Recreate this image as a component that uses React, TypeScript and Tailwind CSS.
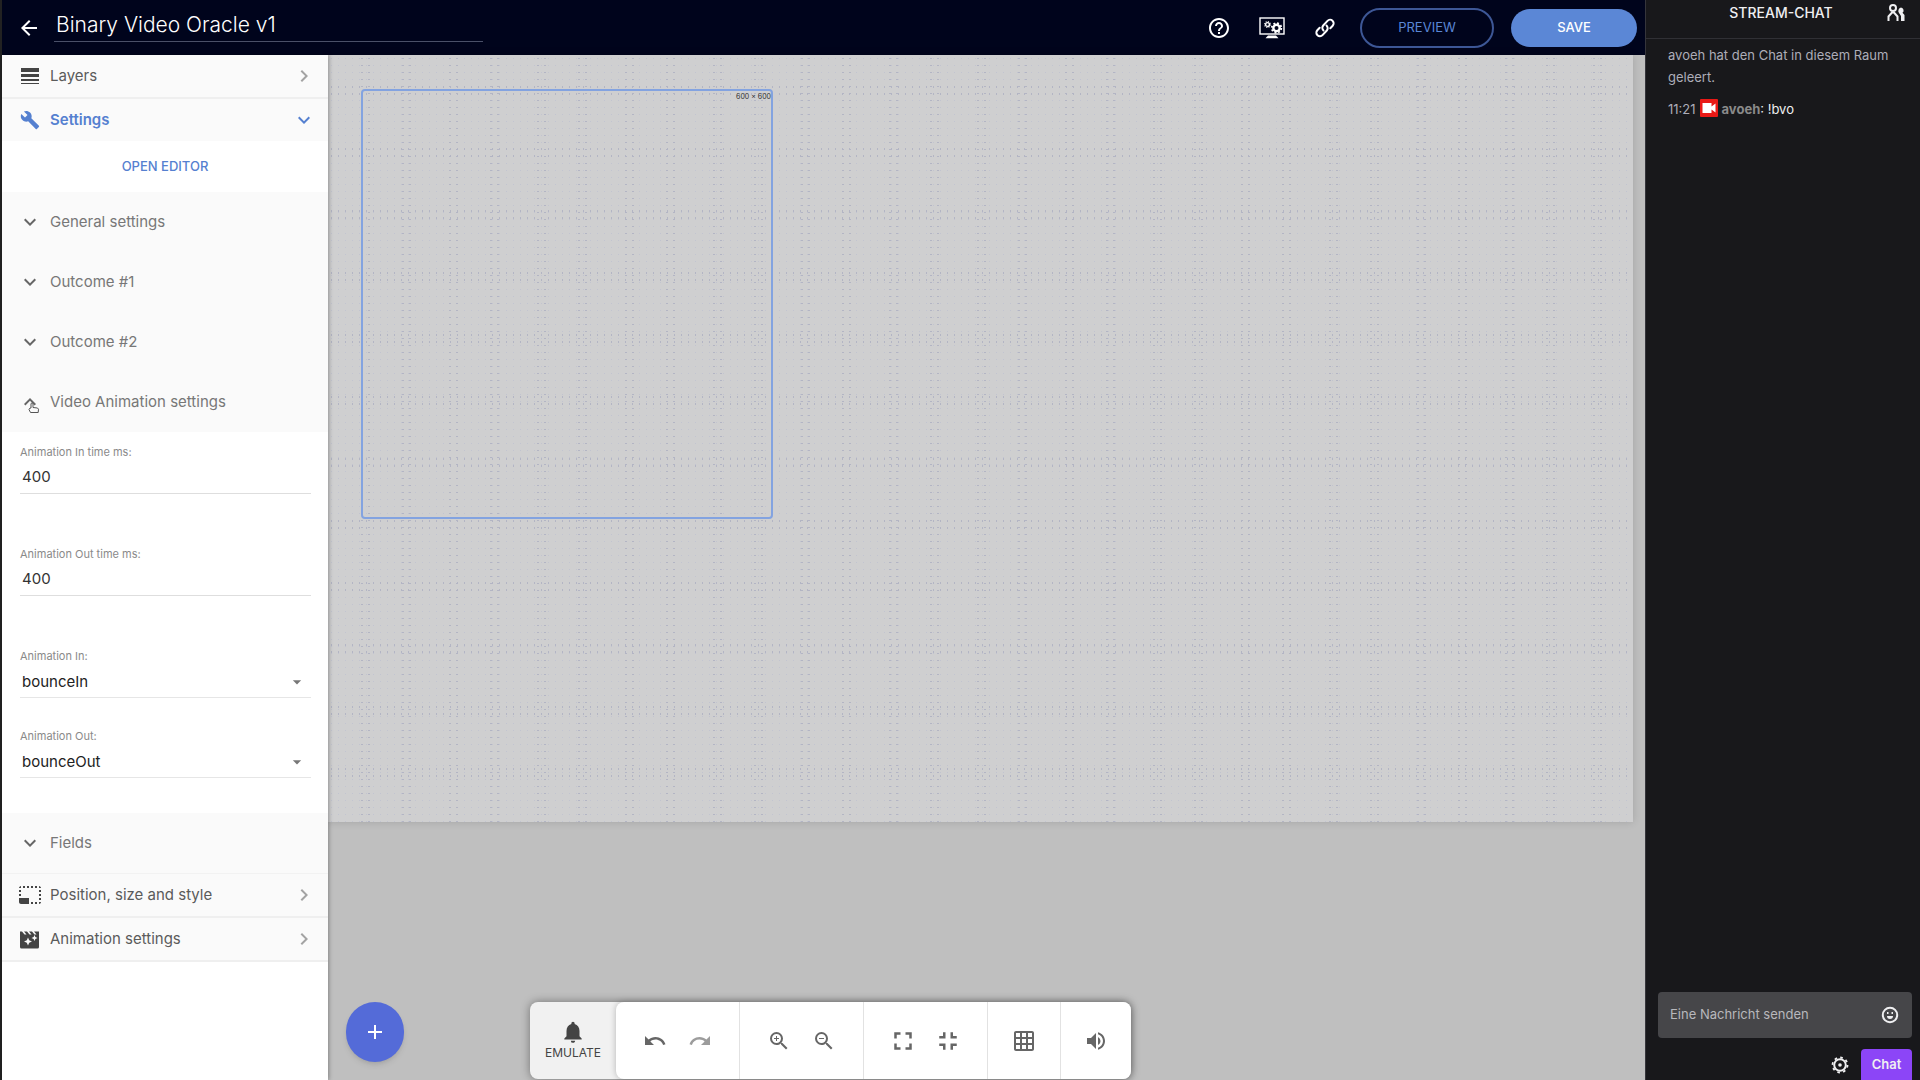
import type { ReactNode } from "react";
import {
  MdAdd,
  MdArrowBack,
  MdArrowDropDown,
  MdBuild,
  MdFullscreen,
  MdFullscreenExit,
  MdGridOn,
  MdHelpOutline,
  MdKeyboardArrowDown,
  MdKeyboardArrowRight,
  MdKeyboardArrowUp,
  MdLineWeight,
  MdNotifications,
  MdPhotoSizeSelectSmall,
  MdRedo,
  MdUndo,
  MdVolumeUp,
  MdZoomIn,
  MdZoomOut,
} from "react-icons/md";

interface toolGroupInterface {
  children: ReactNode;
  padding: string;
}

interface sectionRowInterface {
  icon: ReactNode;
  title: string;
}

interface fieldInterface {
  id: string;
  label: string;
  value: string;
}

const MonitorIcon = () => (
  <svg viewBox="0 0 26 24" className="w-[26px] h-6" fill="none">
    <rect x="1" y="2" width="24" height="16" stroke="white" strokeWidth="1.4" />
    <path d="M9 19.500h8l2.500 2.800h-13z" fill="white" />
    <circle cx="8.500" cy="8.500" r="1.900" stroke="white" strokeWidth="1.400" />
    <circle cx="8.500" cy="8.500" r="2.900" stroke="white" strokeWidth="1.100" strokeDasharray="1.100 1.177" />
    <circle cx="17.500" cy="12" r="3.200" stroke="white" strokeWidth="2.400" />
    <circle cx="17.500" cy="12" r="4.800" stroke="white" strokeWidth="1.800" strokeDasharray="1.900 1.870" />
  </svg>
);

const LinkIcon = () => (
  <svg viewBox="0 0 24 24" className="size-6" fill="none" stroke="white" strokeWidth="2" strokeLinecap="round">
    <path d="M10.500 14.500a3.600 3.600 0 0 1-.3-5l4.300-4.600a3.500 3.500 0 0 1 5.200 4.800L17.300 12.300" />
    <path d="M13.500 9.500a3.600 3.600 0 0 1 .3 5l-4.300 4.600a3.500 3.500 0 0 1-5.200-4.800L6.700 11.700" />
  </svg>
);

const MovieFilterIcon = () => (
  <svg viewBox="0 0 24 24" className="size-6" fill="#444">
    <path
      fillRule="evenodd"
      d="M2 4.500h2l2.500 3h2l-2.500-3h3l2.500 3h2l-2.500-3h3l2.500 3h2l-2.500-3h5V20a1.500 1.500 0 0 1-1.500 1.500h-16A1.500 1.500 0 0 1 2 20zM10 10.500l-1.200 2.800L6 14.500l2.800 1.200L10 18.500l1.200-2.800L14 14.500l-2.800-1.200zM16.500 8l-.9 2.100-2.100.9 2.100.9.9 2.100.9-2.100 2.100-.9-2.100-.9z"
    />
  </svg>
);

const PeopleIcon = () => (
  <svg viewBox="0 0 20 20" className="size-5" fill="none" stroke="#efeff1" strokeWidth="2">
    <circle cx="7" cy="5" r="3" />
    <path d="M2.500 18v-4.500L6 9.500h2l3.500 4V18" />
    <path d="M15 4.500a3 3 0 0 1 1.500 5.300l2 2.200v6h-3.500v-5l-2-3a3.500 3.500 0 0 1 2-5.500z" fill="#efeff1" stroke="none" />
  </svg>
);

const SmileyIcon = () => (
  <svg viewBox="0 0 20 20" className="size-5" fill="none" stroke="#efeff1" strokeWidth="2">
    <circle cx="10" cy="10" r="7.200" />
    <path d="M7 8h1.500M11.500 8H13" />
    <path d="M7 11h6a3 3 0 0 1-6 0z" fill="#efeff1" stroke="none" />
  </svg>
);

const GearIcon = () => (
  <svg viewBox="0 0 20 20" className="size-5" fill="none" stroke="#efeff1">
    <circle cx="10" cy="10" r="5.800" strokeWidth="2" />
    <circle cx="10" cy="10" r="7.500" strokeWidth="1.800" strokeDasharray="2.600 3.290" />
    <circle cx="10" cy="10" r="1.800" fill="#efeff1" stroke="none" />
  </svg>
);

const CameraBadge = () => (
  <svg viewBox="0 0 18 18" className="inline size-[18px] mx-1 align-text-bottom">
    <rect width="18" height="18" rx="1" fill="#e91916" />
    <path d="M2.500 4h9v3.500L15.500 4.500v9L11.500 10.500V14h-9z" fill="white" />
  </svg>
);

const HandCursor = () => (
  <svg viewBox="0 0 12 12" className="absolute left-2.5 top-3 size-3" fill="#fafafa" stroke="#555" strokeWidth="1">
    <path d="M3 6V2a1 1 0 0 1 2 0v3.500l4.500.5 1 1.200-.3 3.300H2.500L1 7.500 2 6z" />
  </svg>
);

/* dotted snap grid: faint dots everywhere, darker double lines on the guides */
const DotGrid = () => (
  <svg className="block size-full">
    <defs>
      <pattern id="dots" width="7" height="7" patternUnits="userSpaceOnUse">
        <rect x="3" y="3" width="1" height="1" fill="#c2c4d0" />
      </pattern>
      <pattern id="columns" width="88" height="7" patternUnits="userSpaceOnUse">
        <path d="M33 3h2v1h-2zM40 3h2v1h-2zM81 3h2v1h-2zM74 3h2v1h-2z" fill="#b3b5c4" />
      </pattern>
      <pattern id="rows" width="7" height="62" patternUnits="userSpaceOnUse">
        <path d="M3 31h1v2h-1zM3 38h1v2h-1z" fill="#b3b5c4" />
      </pattern>
    </defs>
    <rect width="100%" height="100%" fill="url(#dots)" />
    <rect width="100%" height="100%" fill="url(#columns)" />
    <rect width="100%" height="100%" fill="url(#rows)" />
  </svg>
);

const PanelRow = ({ icon, title }: sectionRowInterface) => {
  return (
    <button className="flex items-center w-full h-11 pl-4 pr-3 border-b-2 border-[#efefef] bg-[#fafafa] text-[#5b5b5b]">
      <span className="flex justify-center w-6 text-[#444]">{icon}</span>
      <span className="ml-2 grow text-left text-[15px]">{title}</span>
      <MdKeyboardArrowRight className="text-2xl text-[#a3a3a3]" />
    </button>
  );
};

const GroupRow = ({ icon, title }: sectionRowInterface) => {
  return (
    <button className="flex items-center w-full h-[60px] pl-4 bg-[#fafafa] text-[#777]">
      <span className="relative text-[#666]">{icon}</span>
      <span className="ml-2 text-[15px]">{title}</span>
    </button>
  );
};

const TextField = ({ id, label, value }: fieldInterface) => {
  return (
    <div className="h-[102px]">
      <label htmlFor={id} className="block text-[11px] leading-4 text-[#8a8a8a]">
        {label}
      </label>
      <input
        id={id}
        defaultValue={value}
        className="block w-full h-[34px] px-0.5 border-b border-[#dedede] text-[15px] text-[#333] outline-none"
      />
    </div>
  );
};

const SelectField = ({ id, label, value }: fieldInterface) => {
  return (
    <div className="h-20">
      <label htmlFor={id} className="block text-[11px] leading-4 text-[#8a8a8a]">
        {label}
      </label>
      <div className="relative">
        <select
          id={id}
          defaultValue={value}
          className="block w-full h-[34px] px-0.5 pt-1 appearance-none border-b border-[#e6e6e6] text-[15px] text-[#222] outline-none"
        >
          <option>{value}</option>
        </select>
        <MdArrowDropDown className="absolute right-1 top-2 text-xl text-[#777] pointer-events-none" />
      </div>
    </div>
  );
};

const ToolGroup = ({ children, padding }: toolGroupInterface) => {
  return (
    <div className={`flex items-center gap-[21px] ${padding} border-l border-[#e2e2e2] first:border-l-0 text-2xl text-[#666]`}>
      {children}
    </div>
  );
};

const Header = () => {
  return (
    <header className="flex items-center h-[55px] shrink-0 bg-[#00041c] text-white">
      <button aria-label="Back" className="ml-[15px]">
        <MdArrowBack className="text-2xl" />
      </button>
      <input
        aria-label="Overlay name"
        defaultValue="Binary Video Oracle v1"
        className="ml-[13px] mb-0.5 w-[429px] h-[31px] px-0.5 pb-0.5 border-b border-[#4a5068] text-[21px] font-light outline-none"
      />
      <div className="flex items-center ml-auto mr-2">
        <button aria-label="Help">
          <MdHelpOutline className="text-2xl" />
        </button>
        <button aria-label="Display settings" className="ml-7">
          <MonitorIcon />
        </button>
        <button aria-label="Copy link" className="ml-7">
          <LinkIcon />
        </button>
        <button className="ml-[23px] w-[134px] h-10 rounded-full border-2 border-[#3d5796] text-[13px] text-[#5b87d6]">
          PREVIEW
        </button>
        <button className="ml-[17px] w-[126px] h-[38px] rounded-full bg-[#5b87d6] text-[13px] font-medium">
          SAVE
        </button>
      </div>
    </header>
  );
};

const Sidebar = () => {
  return (
    <aside className="w-[326px] shrink-0 bg-white z-10 shadow-[1px_0_4px_rgba(0,0,0,0.3)]">
      <PanelRow icon={<MdLineWeight className="text-2xl" />} title="Layers" />
      <button className="flex items-center w-full h-[42px] pl-4 pr-3 bg-[#fafafa] text-[#5580d0]">
        <span className="flex justify-center w-6">
          <MdBuild className="text-xl" />
        </span>
        <span className="ml-2 grow text-left text-[15px] font-semibold">Settings</span>
        <MdKeyboardArrowDown className="text-2xl" />
      </button>
      <button className="block w-full h-[51px] text-[13px] font-medium text-[#5580d0]">OPEN EDITOR</button>

      <GroupRow icon={<MdKeyboardArrowDown className="size-6" />} title="General settings" />
      <GroupRow icon={<MdKeyboardArrowDown className="size-6" />} title="Outcome #1" />
      <GroupRow icon={<MdKeyboardArrowDown className="size-6" />} title="Outcome #2" />
      <GroupRow
        icon={
          <>
            <MdKeyboardArrowUp className="size-6" />
            <HandCursor />
          </>
        }
        title="Video Animation settings"
      />

      <div className="h-[381px] pl-[18px] pr-[17px] pt-3">
        <TextField id="in-time" label="Animation In time ms:" value="400" />
        <TextField id="out-time" label="Animation Out time ms:" value="400" />
        <SelectField id="anim-in" label="Animation In:" value="bounceIn" />
        <SelectField id="anim-out" label="Animation Out:" value="bounceOut" />
      </div>

      <div className="border-b border-[#f2f2f2]">
        <GroupRow icon={<MdKeyboardArrowDown className="size-6" />} title="Fields" />
      </div>
      <PanelRow icon={<MdPhotoSizeSelectSmall className="text-2xl" />} title="Position, size and style" />
      <PanelRow icon={<MovieFilterIcon />} title="Animation settings" />
    </aside>
  );
};

const Chat = () => {
  return (
    <section className="flex flex-col w-[275px] shrink-0 bg-[#18181b] border-l border-[#35353b] text-[13px] text-[#efeff1]">
      <div className="flex items-center h-[39px] pb-3 shrink-0 border-b border-[#303035]">
        <h2 className="grow pl-11 text-center text-sm font-medium">STREAM-CHAT</h2>
        <button aria-label="Community" className="w-12 flex justify-center">
          <PeopleIcon />
        </button>
      </div>
      <div className="grow px-[22px] pt-[5px]">
        <p className="leading-[22px] text-[#adadb8]">avoeh hat den Chat in diesem Raum geleert.</p>
        <p className="mt-2.5 leading-[22px]">
          <span className="text-[#adadb8]">11:21</span>
          <CameraBadge />
          <span className="font-bold text-[#8a8a8a]">avoeh</span>: !bvo
        </p>
      </div>
      <div className="flex items-center h-[46px] ml-3 mr-2 pl-3 pr-3 rounded bg-[#464649]">
        <input
          aria-label="Eine Nachricht senden"
          placeholder="Eine Nachricht senden"
          className="grow min-w-0 placeholder:text-[#b8b8bc] outline-none"
        />
        <button aria-label="Emotes">
          <SmileyIcon />
        </button>
      </div>
      <div className="flex items-center justify-end gap-[11px] mt-[11px] mr-2">
        <button aria-label="Chat settings">
          <GearIcon />
        </button>
        <button className="w-[51px] h-[31px] rounded-t bg-[#8c45f7] font-semibold">Chat</button>
      </div>
    </section>
  );
};

const App = () => {
  return (
    <div className="flex h-screen overflow-hidden font-['Inter','Liberation_Sans',sans-serif]">
      <div className="flex flex-col grow min-w-0 border-l-2 border-[#222]">
        <Header />
        <div className="flex grow min-h-0">
          <Sidebar />
          <main className="relative flex flex-col grow min-w-0 bg-[#bfbfbf]">
            <div className="relative h-[767px] mr-3 bg-[#cfcfd0] shadow-[0_0_8px_rgba(0,0,0,0.15)]">
              <DotGrid />
              <div className="absolute left-[33px] top-[34px] w-[412px] h-[430px] rounded border-2 border-[#83a3e0]">
                <span className="absolute right-0 top-0 text-[7px] leading-3 text-[#333]">600 x 600</span>
              </div>
            </div>
            <button
              aria-label="Add widget"
              className="absolute left-[18px] bottom-[18px] flex items-center justify-center w-[58px] h-[60px] rounded-full bg-[#546bd8] text-2xl text-white shadow-md"
            >
              <MdAdd />
            </button>
            <div className="absolute left-[202px] bottom-px flex h-[77px] rounded-lg bg-[#f1f1f1] shadow-[0_0_10px_rgba(0,0,0,0.4)]">
              <button className="flex flex-col items-center justify-center w-[86px] pb-0.5 text-xs leading-4 text-[#444]">
                <MdNotifications className="text-[26px]" />
                EMULATE
              </button>
              <div className="flex rounded-lg bg-white shadow-[0_0_6px_rgba(0,0,0,0.25)]">
                <ToolGroup padding="px-[27px]">
                  <button aria-label="Undo"><MdUndo /></button>
                  <button aria-label="Redo" className="text-[#9c9c9c]"><MdRedo /></button>
                </ToolGroup>
                <ToolGroup padding="px-[27px]">
                  <button aria-label="Zoom in"><MdZoomIn /></button>
                  <button aria-label="Zoom out"><MdZoomOut /></button>
                </ToolGroup>
                <ToolGroup padding="px-[27px]">
                  <button aria-label="Fullscreen" className="flex justify-center w-6">
                    <MdFullscreen className="size-[30px] shrink-0" />
                  </button>
                  <button aria-label="Exit fullscreen" className="flex justify-center w-6">
                    <MdFullscreenExit className="size-[30px] shrink-0" />
                  </button>
                </ToolGroup>
                <ToolGroup padding="px-6">
                  <button aria-label="Grid"><MdGridOn /></button>
                </ToolGroup>
                <ToolGroup padding="px-[23px]">
                  <button aria-label="Volume"><MdVolumeUp /></button>
                </ToolGroup>
              </div>
            </div>
          </main>
        </div>
      </div>
      <Chat />
    </div>
  );
};

export default App;
